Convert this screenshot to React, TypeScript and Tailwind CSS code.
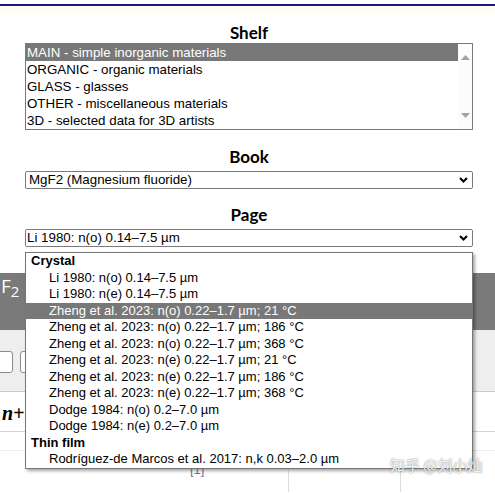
import React from "react";

const Chevron = () => (
  <svg width="9" height="6" viewBox="0 0 9 6" className="shrink-0">
    <polyline points="1,1 4.5,4.5 8,1" fill="none" stroke="#000" strokeWidth="2" />
  </svg>
);

const shelves = [
  "MAIN - simple inorganic materials",
  "ORGANIC - organic materials",
  "GLASS - glasses",
  "OTHER - miscellaneous materials",
  "3D - selected data for 3D artists",
];

type Row = { t: string; group?: boolean; sel?: boolean };
const rows: Row[] = [
  { t: "Crystal", group: true },
  { t: "Li 1980: n(o) 0.14–7.5 µm" },
  { t: "Li 1980: n(e) 0.14–7.5 µm" },
  { t: "Zheng et al. 2023: n(o) 0.22–1.7 µm; 21 °C", sel: true },
  { t: "Zheng et al. 2023: n(o) 0.22–1.7 µm; 186 °C" },
  { t: "Zheng et al. 2023: n(o) 0.22–1.7 µm; 368 °C" },
  { t: "Zheng et al. 2023: n(e) 0.22–1.7 µm; 21 °C" },
  { t: "Zheng et al. 2023: n(e) 0.22–1.7 µm; 186 °C" },
  { t: "Zheng et al. 2023: n(e) 0.22–1.7 µm; 368 °C" },
  { t: "Dodge 1984: n(o) 0.2–7.0 µm" },
  { t: "Dodge 1984: n(e) 0.2–7.0 µm" },
  { t: "Thin film", group: true },
  { t: "Rodríguez-de Marcos et al. 2017: n,k 0.03–2.0 µm" },
];

export default function App() {
  const heading =
    "h-[20px] leading-[20px] text-center text-[17px] font-bold text-black font-['Lato','Open_Sans',sans-serif]";
  return (
    <div className="relative w-[495px] h-[493px] overflow-hidden bg-white text-[13.33px] text-black font-['Liberation_Sans',Arial,sans-serif]">
      <div className="h-[4px]" />
      <div className="h-[2px] bg-[#16168c]" />
      <div className="h-[7px] bg-[#fffbef]" />

      <div className="ml-[25px] w-[448px]">
        <div className={`mt-[10px] ${heading}`}>Shelf</div>
        <div className="flex h-[87px] border border-[#7a7a7a] bg-white">
          <div className="flex-1">
            {shelves.map((s, i) => (
              <div
                key={s}
                className={`h-[17px] leading-[17px] pl-px whitespace-nowrap ${
                  i === 0 ? "bg-[#787878] text-white" : ""
                }`}
              >
                {s}
              </div>
            ))}
          </div>
          <div className="w-[14px] bg-[#fcfcfc] flex flex-col items-center justify-between py-[11px]">
            <svg width="9" height="5" viewBox="0 0 9 5">
              <polygon points="0,5 9,5 4.5,0" fill="#a3a3a3" />
            </svg>
            <svg width="9" height="5" viewBox="0 0 9 5">
              <polygon points="0,0 9,0 4.5,5" fill="#a3a3a3" />
            </svg>
          </div>
        </div>

        <div className={`mt-[17px] ${heading}`}>Book</div>
        <div className="mt-[4px] h-[18px] flex items-center justify-between border border-[#7a7a7a] rounded-[2px] pl-[3px] pr-[4px]">
          <span className="leading-[16px]">MgF2 (Magnesium fluoride)</span>
          <Chevron />
        </div>

        <div className={`mt-[16px] ${heading}`}>Page</div>
        <div className="mt-[4px] h-[18px] flex items-center justify-between border border-[#7a7a7a] rounded-[2px] pl-[1px] pr-[4px]">
          <span className="leading-[16px]">Li 1980: n(o) 0.14–7.5 µm</span>
          <Chevron />
        </div>
      </div>

      {/* page content behind the open dropdown */}
      <div className="mt-[26px] h-[57px] bg-[#7a7a7a] text-white font-['Open_Sans',sans-serif] pt-[1px] pl-[1px]">
        <span className="text-[19px] leading-[24px]">
          F<sub className="text-[15px]">2</sub>
        </span>
      </div>
      <div className="h-[62px] bg-[#eeeeee] border-b border-[#c9c9c9] pt-[21px] flex gap-[7px]">
        <div className="-ml-[20px] w-[33px] h-[22px] bg-white border border-[#8c8c8c] rounded-[3px]" />
        <div className="w-[40px] h-[22px] bg-white border border-[#8c8c8c] rounded-[3px]" />
      </div>
      <div className="h-[40px] border-b border-[#d2d2d2] flex items-center pl-[2px] pt-[2px]">
        <span className="font-['Liberation_Serif',serif] italic font-bold text-[20px] leading-[20px]">n+</span>
      </div>
      <div className="h-[19px] border-b border-[#ececec]" />
      <div className="flex h-[41px]">
        <div className="w-[288px] pt-[11px] pl-[190px] text-[#6b7aa8] text-[13px] leading-[15px]">[1]</div>
        <div className="w-[112px] mt-[19px] border-l border-[#dcdcdc]" />
        <div className="flex-1 mt-[19px] border-l border-[#dcdcdc]" />
      </div>

      {/* open dropdown list */}
      <div className="absolute left-[25px] top-[252px] w-[448px] border border-[#767676] bg-white text-[13px] shadow-[2px_2px_3px_rgba(0,0,0,0.35)]">
        {rows.map((r) => (
          <div
            key={r.t}
            className={`h-[16.5px] leading-[16.5px] whitespace-nowrap ${
              r.group ? "font-bold pl-[5px]" : "pl-[23px]"
            } ${r.sel ? "bg-[#787878] text-white" : ""}`}
          >
            {r.t}
          </div>
        ))}
      </div>

      {/* watermark */}
      <div className="absolute left-[390px] top-[455px] text-[15px] leading-[20px] text-white/90 font-['Noto_Sans_CJK_SC',sans-serif] [text-shadow:0_0_1.5px_#5f5f5f]">
        知乎 @刘小灿
      </div>
    </div>
  );
}
